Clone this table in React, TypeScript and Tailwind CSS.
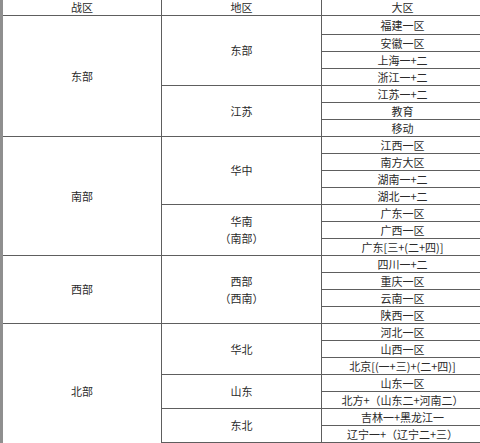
type Region = { name: string[]; items: string[] };
type Zone = { zone: string; regions: Region[] };

const data: Zone[] = [
  {
    zone: "东部",
    regions: [
      { name: ["东部"], items: ["福建一区", "安徽一区", "上海一+二", "浙江一+二"] },
      { name: ["江苏"], items: ["江苏一+二", "教育", "移动"] },
    ],
  },
  {
    zone: "南部",
    regions: [
      { name: ["华中"], items: ["江西一区", "南方大区", "湖南一+二", "湖北一+二"] },
      { name: ["华南", "（南部）"], items: ["广东一区", "广西一区", "广东[三+(二+四)]"] },
    ],
  },
  {
    zone: "西部",
    regions: [
      { name: ["西部", "（西南）"], items: ["四川一+二", "重庆一区", "云南一区", "陕西一区"] },
    ],
  },
  {
    zone: "北部",
    regions: [
      { name: ["华北"], items: ["河北一区", "山西一区", "北京[(一+三)+(二+四)]"] },
      { name: ["山东"], items: ["山东一区", "北方+（山东二+河南二）"] },
      { name: ["东北"], items: ["吉林一+黑龙江一", "辽宁一+（辽宁二+三）"] },
      { name: [""], items: [""] },
    ],
  },
];

const cell =
  "flex flex-col items-center justify-center border-b border-r border-[#5e5e5e] text-center leading-[17px]";

export default function App() {
  return (
    <div
      className="h-[443px] w-[480px] overflow-hidden border-l-[3px] border-[#8f8f8f] bg-white text-[11px] text-[#2a2a2a]"
      style={{ fontFamily: '"Noto Sans CJK SC", "Liberation Sans", sans-serif' }}
    >
      <div className="grid w-[481px] grid-cols-[159px_160px_162px] grid-rows-[16px_19px] auto-rows-[17px]">
        <div className={`${cell} col-start-1`}>战区</div>
        <div className={`${cell} col-start-2`}>地区</div>
        <div className={`${cell} col-start-3`}>大区</div>

        {data.map((z) => {
          const total = z.regions.reduce((n, r) => n + r.items.length, 0);
          return [
            <div key={z.zone} className={`${cell} col-start-1`} style={{ gridRow: `span ${total}` }}>
              {z.zone}
            </div>,
            ...z.regions.map((r, ri) => [
              <div
                key={`${z.zone}-r${ri}`}
                className={`${cell} col-start-2`}
                style={{ gridRow: `span ${r.items.length}` }}
              >
                {r.name.map((line, li) => (
                  <span key={li}>{line}</span>
                ))}
              </div>,
              ...r.items.map((item, ii) => (
                <div key={`${z.zone}-r${ri}-i${ii}`} className={`${cell} col-start-3`}>
                  {item}
                </div>
              )),
            ]),
          ];
        })}
      </div>
    </div>
  );
}
